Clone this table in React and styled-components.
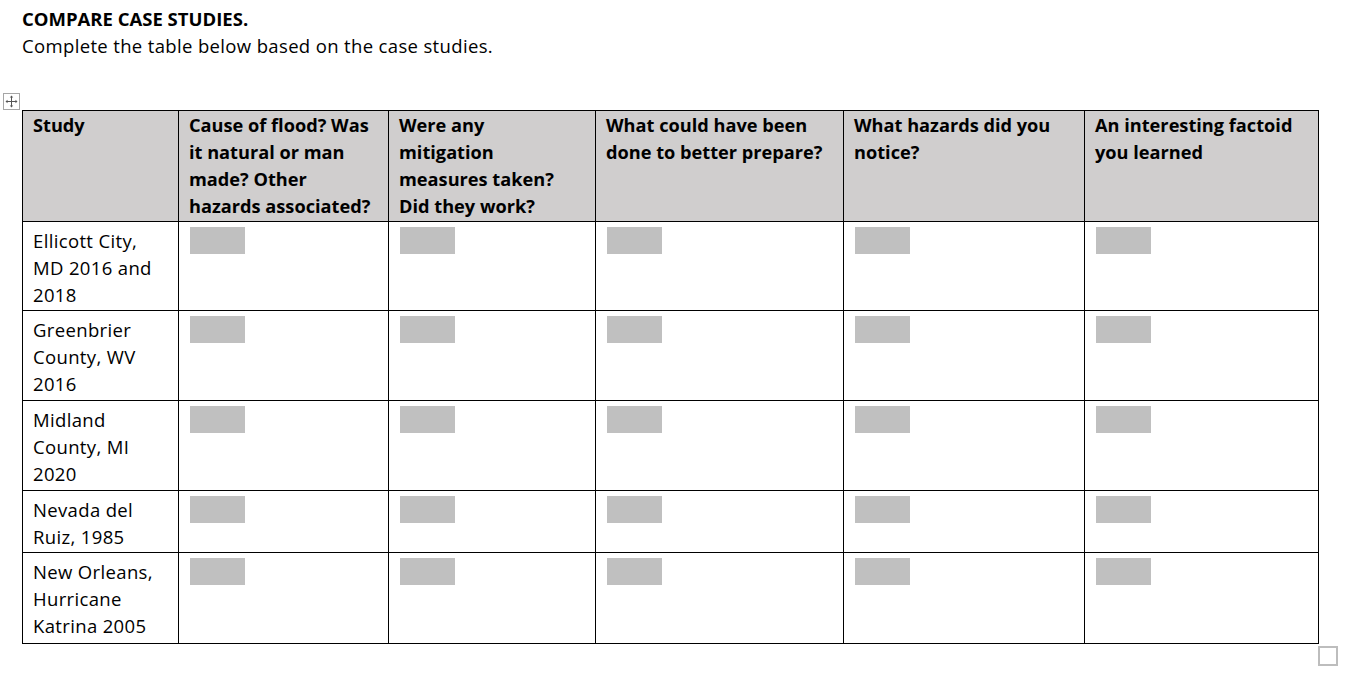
import React from 'react'
import styled, { createGlobalStyle } from 'styled-components'

const GlobalStyle = createGlobalStyle`
  html, body {
    margin: 0;
    padding: 0;
    background: #ffffff;
  }
  body {
    font-family: "Open Sans", "Noto Sans", sans-serif;
    color: #000000;
  }
`

const Page = styled.div`
  padding: 5px 0 0 0;
  font-size: 18.5px;
  line-height: 27px;
  letter-spacing: 0.35px;
`

const Intro = styled.div`
  padding-left: 22px;
`

const Title = styled.div`
  font-weight: 700;
  letter-spacing: 0;
`

const Lead = styled.div``

const Handle = styled.div`
  margin: 34px 0 0 3px;
  width: 15px;
  height: 15px;
  border: 1px solid #a6a6a6;
  display: flex;
  align-items: center;
  justify-content: center;
  background: #ffffff;
`

const Grid = styled.table`
  margin-left: 22px;
  border-collapse: collapse;
  table-layout: fixed;
  width: 1296px;
`

const Head = styled.th`
  background: #d0cece;
  border: 1px solid #000000;
  font-weight: 700;
  font-size: 18.2px;
  letter-spacing: 0;
  text-align: left;
  vertical-align: top;
  padding: 1px 4px 1px 10px;
  height: 108px;
  box-sizing: content-box;
  white-space: nowrap;
`

const Cell = styled.td`
  border: 1px solid #000000;
  vertical-align: top;
  padding: 5px 4px ${p => p.$bottom}px 10px;
  text-align: left;
  white-space: nowrap;
`

const Line = styled.div`
  height: 27px;
`

const Field = styled.span`
  display: block;
  width: 55px;
  height: 27px;
  background: #c0c0c0;
  margin-left: 1px;
`

const Corner = styled.div`
  margin: 2px 0 0 1318px;
  width: 16px;
  height: 16px;
  border: 2px solid #bdbdbd;
  background: #ffffff;
`

const columns = [
  { w: 156, label: ['Study'] },
  { w: 210, label: ['Cause of flood? Was', 'it natural or man', 'made? Other', 'hazards associated?'] },
  { w: 207, label: ['Were any', 'mitigation', 'measures taken?', 'Did they work?'] },
  { w: 248, label: ['What could have been', 'done to better prepare?'] },
  { w: 241, label: ['What hazards did you', 'notice?'] },
  { w: 234, label: ['An interesting factoid', 'you learned'] },
]

const studies = [
  { bottom: 2, lines: ['Ellicott City,', 'MD 2016 and', '2018'] },
  { bottom: 3, lines: ['Greenbrier', 'County, WV', '2016'] },
  { bottom: 3, lines: ['Midland', 'County, MI', '2020'] },
  { bottom: 2, lines: ['Nevada del', 'Ruiz, 1985'] },
  { bottom: 4, lines: ['New Orleans,', 'Hurricane', 'Katrina 2005'] },
]

const MoveIcon = () => (
  <svg width="13" height="13" viewBox="0 0 13 13" fill="none">
    <path d="M6.5 1v11M1 6.5h11" stroke="#555" strokeWidth="1" />
    <path d="M6.5 0.5L4.8 2.5h3.4zM6.5 12.5L4.8 10.5h3.4zM0.5 6.5L2.5 4.8v3.4zM12.5 6.5L10.5 4.8v3.4z" fill="#555" />
  </svg>
)

const Lines = ({ items }) => items.map((l, k) => <Line key={k}>{l}</Line>)

const App = () => {
  return (
    <Page>
      <GlobalStyle />
      <Intro>
        <Title>COMPARE CASE STUDIES.</Title>
        <Lead>Complete the table below based on the case studies.</Lead>
      </Intro>
      <Handle>
        <MoveIcon />
      </Handle>
      <Grid>
        <colgroup>
          {columns.map((c, i) => (
            <col key={i} style={{ width: c.w }} />
          ))}
        </colgroup>
        <thead>
          <tr>
            {columns.map((c, i) => (
              <Head key={i}>
                <Lines items={c.label} />
              </Head>
            ))}
          </tr>
        </thead>
        <tbody>
          {studies.map((s, r) => (
            <tr key={r}>
              <Cell $bottom={s.bottom}>
                <Lines items={s.lines} />
              </Cell>
              {columns.slice(1).map((c, i) => (
                <Cell key={i} $bottom={s.bottom}>
                  <Field />
                </Cell>
              ))}
            </tr>
          ))}
        </tbody>
      </Grid>
      <Corner />
    </Page>
  )
}

export default App
